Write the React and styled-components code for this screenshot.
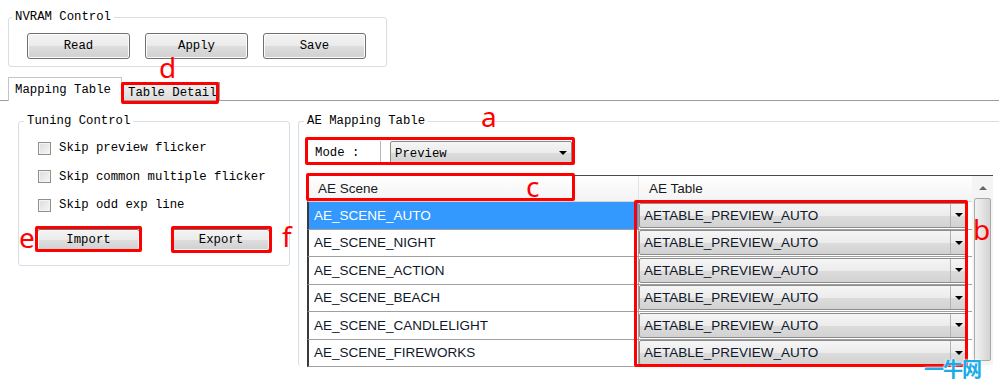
import React from "react";
import styled, { createGlobalStyle } from "styled-components";

const GlobalStyle = createGlobalStyle`
  html, body {
    margin: 0;
    background: #fff;
  }
  * {
    box-sizing: border-box;
  }
`;

const mono = `"Liberation Mono", "DejaVu Sans Mono", monospace`;
const sans = `"Liberation Sans", Arial, sans-serif`;

const Page = styled.div`
  position: relative;
  width: 999px;
  height: 383px;
  overflow: hidden;
  font-family: ${mono};
  font-size: 12.3px;
  color: #000;
`;

const Group = styled.fieldset`
  margin: ${(p) => p.$margin || 0};
  padding: 0;
  width: ${(p) => p.$w}px;
  height: ${(p) => p.$h}px;
  border: 1px solid #d5dfe5;
  border-radius: 3px;
  flex: none;
  ${(p) => p.$open && "border-right: none; border-bottom: none;"}
`;

const Legend = styled.legend`
  margin-left: ${(p) => p.$indent}px;
  padding: 0 3px;
  line-height: 14px;
  font-size: 12.3px;
`;

const ButtonRow = styled.div`
  display: flex;
  gap: ${(p) => p.$gap}px;
  padding: ${(p) => p.$pad};
`;

const Button = styled.button`
  width: ${(p) => p.$w}px;
  height: ${(p) => p.$h}px;
  padding: 0;
  font-family: ${mono};
  font-size: 12.3px;
  color: #000;
  border: 1px solid #707070;
  border-radius: 3px;
  background: linear-gradient(#f3f3f3 0%, #ebebeb 48%, #dddddd 52%, #d0d0d0 100%);
  box-shadow: inset 0 0 0 1px #fcfcfc;
`;

const TabStrip = styled.div`
  display: flex;
  align-items: flex-end;
  margin-top: 10px;
  padding-left: 8px;
  height: 24px;
  border-bottom: 1px solid #9c9c9c;
`;

const Tab = styled.div`
  height: ${(p) => (p.$active ? 24 : 18)}px;
  width: ${(p) => p.$w}px;
  padding: ${(p) => (p.$active ? "5px 0 0 6px" : "3px 0 0 5px")};
  line-height: 14px;
  border: 1px solid ${(p) => (p.$active ? "#c4c4c4" : "#9a9a9a")};
  border-bottom: none;
  margin-bottom: ${(p) => (p.$active ? "-1px" : "0")};
  background: ${(p) => (p.$active ? "#fff" : "linear-gradient(#f2f2f2, #dcdcdc)")};
`;

const Panel = styled.div`
  display: flex;
  gap: 8px;
  padding: 13px 0 0 18px;
`;

const CheckList = styled.div`
  padding: 6px 0 0 19px;
`;

const CheckRow = styled.label`
  display: flex;
  align-items: center;
  gap: 8px;
  height: 28.5px;
`;

const Box = styled.span`
  width: 13px;
  height: 13px;
  border: 1px solid #8e8f8f;
  background: linear-gradient(135deg, #dcdcdc, #f6f6f6);
  box-shadow: inset 0 0 0 1px #f4f4f4;
`;

const ModeRow = styled.div`
  display: flex;
  gap: 9px;
  padding: 13px 0 0 8px;
  height: 36px;
`;

const ModeLabel = styled.div`
  width: 74px;
  height: 23px;
  padding: 5px 0 0 8px;
  background: #fff;
  border-right: 1px solid #b9b9b9;
`;

const Combo = styled.div`
  display: flex;
  align-items: center;
  width: ${(p) => p.$w}px;
  height: ${(p) => p.$h}px;
  font-family: ${(p) => (p.$sans ? sans : mono)};
  font-size: ${(p) => (p.$sans ? "13.5px" : "12.3px")};
  color: ${(p) => (p.$sans ? "#10182a" : "#000")};
  border: 1px solid #8c8c8c;
  border-radius: 2px;
  background: linear-gradient(#f5f5f5 0%, #ececec 50%, #dcdcdc 51%, #d2d2d2 100%);
`;

const ComboText = styled.span`
  flex: 1;
  padding: ${(p) => (p.$sans ? "0 0 0 4px" : "2px 0 0 4px")};
  white-space: nowrap;
`;

const ArrowBox = styled.span`
  display: flex;
  align-items: center;
  justify-content: center;
  width: ${(p) => p.$w}px;
  align-self: stretch;
  border-left: ${(p) => (p.$line ? "1px solid #b3b3b3" : "none")};
`;

const Caret = styled.span`
  width: 0;
  height: 0;
  border-left: 4px solid transparent;
  border-right: 4px solid transparent;
  border-top: 4px solid #000;
`;

const TableFrame = styled.div`
  display: flex;
  margin: 11px 0 0 8px;
  width: 686px;
  font-family: ${sans};
  font-size: 13.5px;
  color: #10182a;
`;

const Grid = styled.div`
  flex: 1;
  display: grid;
  grid-template-columns: 331px 334px;
  grid-auto-rows: 27.5px;
  grid-template-rows: 26px;
  border-top: 1px solid #4a4a4a;
`;

const HeadCell = styled.div`
  padding: 5px 0 0 10px;
  color: #1a1a1a;
  background: linear-gradient(#ffffff, #f3f3f3);
  border-bottom: 1px solid #d6d6d6;
  border-left: 1px solid ${(p) => (p.$first ? "#4a4a4a" : "#e4e4e4")};
`;

const Cell = styled.div`
  display: flex;
  align-items: center;
  padding-left: ${(p) => (p.$combo ? "0" : "5px")};
  border-bottom: 1px solid #a0a0a0;
  border-left: ${(p) => (p.$combo ? "1px solid #a0a0a0" : "2px solid #3a3a3a")};
  background: ${(p) => (p.$selected ? "#3399ff" : "#fff")};
  color: ${(p) => (p.$selected ? "#fff" : "inherit")};
`;

const ScrollBar = styled.div`
  width: 21px;
  height: 190px;
  display: flex;
  flex-direction: column;
  align-items: center;
  background: #f4f4f4;
  border-top: 1px solid #4a4a4a;
`;

const UpArrow = styled.span`
  margin: 10px 0 8px;
  width: 0;
  height: 0;
  border-left: 4px solid transparent;
  border-right: 4px solid transparent;
  border-bottom: 4px solid #666;
`;

const Thumb = styled.span`
  width: 17px;
  height: 163px;
  border: 1px solid #a9a9a9;
  border-radius: 2px;
  background: linear-gradient(90deg, #f2f2f2, #e3e3e3 50%, #d3d3d3);
`;

const Mark = styled.div`
  position: absolute;
  left: ${(p) => p.$x}px;
  top: ${(p) => p.$y}px;
  width: ${(p) => p.$w}px;
  height: ${(p) => p.$h}px;
  border: 3px solid #ff0000;
  border-radius: 2px;
  pointer-events: none;
`;

const Letter = styled.span`
  position: absolute;
  left: ${(p) => p.$x}px;
  top: ${(p) => p.$y}px;
  font-family: "Noto Sans", "Open Sans", sans-serif;
  font-size: 28px;
  line-height: 28px;
  color: #ff0000;
`;

const Watermark = styled.span`
  position: absolute;
  left: 924px;
  top: 357px;
  font-family: "Noto Sans CJK SC", sans-serif;
  font-weight: 700;
  font-size: 20px;
  line-height: 24px;
  letter-spacing: -1px;
  color: #19ace8;
  text-shadow: 0 0 2px #fff, 0 0 2px #fff;
`;

const scenes = [
  "AE_SCENE_AUTO",
  "AE_SCENE_NIGHT",
  "AE_SCENE_ACTION",
  "AE_SCENE_BEACH",
  "AE_SCENE_CANDLELIGHT",
  "AE_SCENE_FIREWORKS",
];

const checks = ["Skip preview flicker", "Skip common multiple flicker", "Skip odd exp line"];

const marks = [
  { x: 121, y: 82, w: 98, h: 22 },
  { x: 305, y: 137, w: 270, h: 28 },
  { x: 306, y: 173, w: 269, h: 28 },
  { x: 634, y: 200, w: 334, h: 167 },
  { x: 35, y: 226, w: 107, h: 26 },
  { x: 171, y: 226, w: 101, h: 27 },
];

const letters = [
  { t: "d", x: 159, y: 53 },
  { t: "a", x: 481, y: 102 },
  { t: "c", x: 526, y: 172 },
  { t: "b", x: 973, y: 215 },
  { t: "e", x: 19, y: 223 },
  { t: "f", x: 282, y: 222 },
];

const App = () => {
  return (
    <>
      <GlobalStyle />
      <Page>
        <Group $w={379} $h={57} $margin="10px 0 0 8px">
          <Legend $indent={3}>NVRAM Control</Legend>
          <ButtonRow $gap={15} $pad="9px 0 0 18px">
            <Button $w={103} $h={26}>Read</Button>
            <Button $w={103} $h={26}>Apply</Button>
            <Button $w={103} $h={26}>Save</Button>
          </ButtonRow>
        </Group>

        <TabStrip>
          <Tab $active $w={114}>Mapping Table</Tab>
          <Tab $w={98}>Table Detail</Tab>
        </TabStrip>

        <Panel>
          <Group $w={272} $h={152}>
            <Legend $indent={5}>Tuning Control</Legend>
            <CheckList>
              {checks.map((c) => (
                <CheckRow key={c}>
                  <Box />
                  {c}
                </CheckRow>
              ))}
            </CheckList>
            <ButtonRow $gap={32} $pad="9.5px 0 0 18px">
              <Button $w={103} $h={22}>Import</Button>
              <Button $w={98} $h={22}>Export</Button>
            </ButtonRow>
          </Group>

          <Group $w={720} $h={252} $open>
            <Legend $indent={5}>AE Mapping Table</Legend>
            <ModeRow>
              <ModeLabel>Mode :</ModeLabel>
              <Combo $w={182} $h={23}>
                <ComboText>Preview</ComboText>
                <ArrowBox $w={16}>
                  <Caret />
                </ArrowBox>
              </Combo>
            </ModeRow>

            <TableFrame>
              <Grid>
                <HeadCell $first>AE Scene</HeadCell>
                <HeadCell>AE Table</HeadCell>
                {scenes.map((s, i) => (
                  <React.Fragment key={s}>
                    <Cell $selected={i === 0}>{s}</Cell>
                    <Cell $combo>
                      <Combo $sans $h={25} $w={328}>
                        <ComboText $sans>AETABLE_PREVIEW_AUTO</ComboText>
                        <ArrowBox $w={16} $line>
                          <Caret />
                        </ArrowBox>
                      </Combo>
                    </Cell>
                  </React.Fragment>
                ))}
              </Grid>
              <ScrollBar>
                <UpArrow />
                <Thumb />
              </ScrollBar>
            </TableFrame>
          </Group>
        </Panel>

        {marks.map((m, i) => (
          <Mark key={i} $x={m.x} $y={m.y} $w={m.w} $h={m.h} />
        ))}
        {letters.map((l) => (
          <Letter key={l.t} $x={l.x} $y={l.y}>
            {l.t}
          </Letter>
        ))}
        <Watermark>一牛网</Watermark>
      </Page>
    </>
  );
};

export default App;
